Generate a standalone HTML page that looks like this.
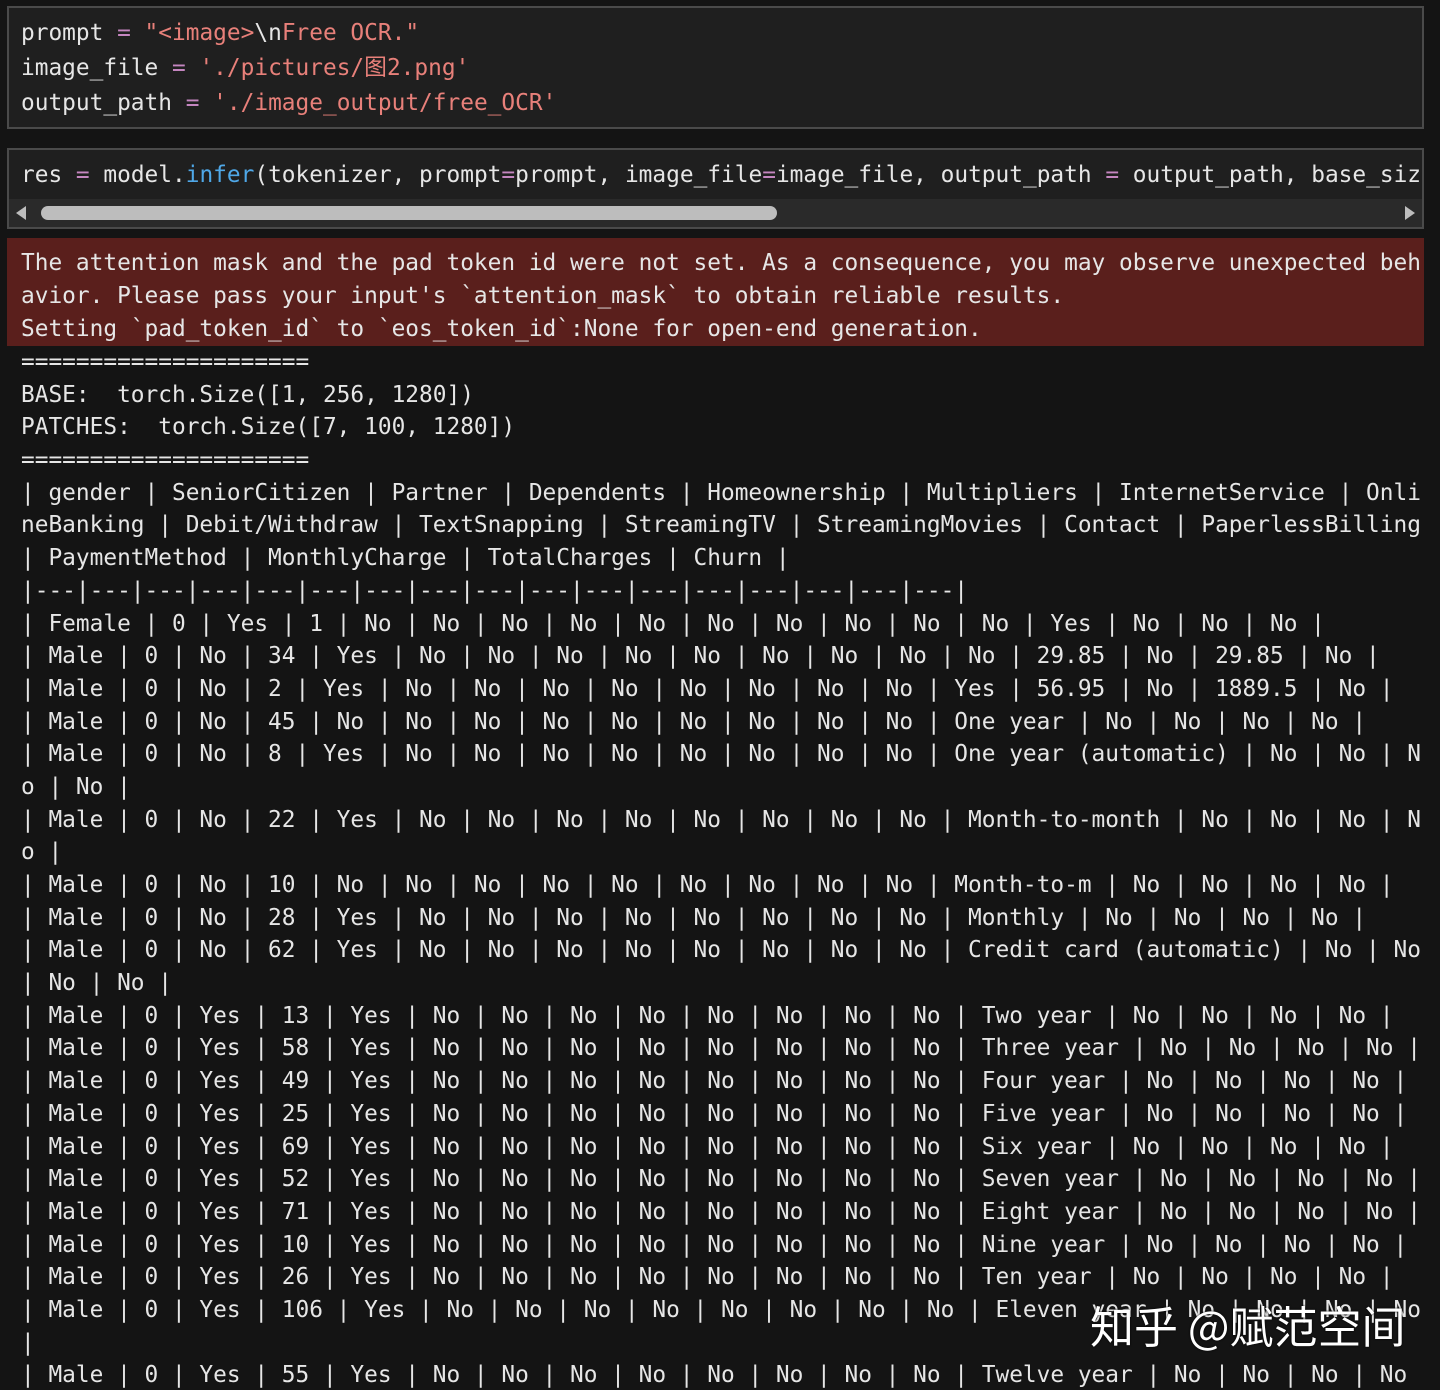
<!DOCTYPE html>
<html><head><meta charset="utf-8"><style>
html,body{margin:0;padding:0;background:#141414;width:1440px;height:1390px;overflow:hidden;position:relative}
*{box-sizing:border-box}
.m{font-family:"DejaVu Sans Mono","Liberation Mono","Noto Sans CJK SC",monospace;font-size:22.8px;white-space:pre;color:#e6e6e6}
.cell{position:absolute;left:7px;width:1417px;background:#1f1f1f;border:2px solid #4a4a4a}
.eq{color:#c586c0}.s{color:#e8807a}.f{color:#4fa8e8}
.l{position:absolute;left:21px;height:33px;line-height:33px}
</style></head><body>
<div class="cell" style="top:6px;height:123px"></div>
<div class="m l" style="top:17px">prompt <span class="eq">=</span> <span class="s">"&lt;image&gt;</span>\n<span class="s">Free OCR."</span></div>
<div class="m l" style="top:52px">image_file <span class="eq">=</span> <span class="s">'./pictures/图2.png'</span></div>
<div class="m l" style="top:87px">output_path <span class="eq">=</span> <span class="s">'./image_output/free_OCR'</span></div>

<div class="cell" style="top:148px;height:81px;overflow:hidden">
<div style="position:absolute;left:0;right:0;top:49px;height:28px;background:#2a2a2a"></div>
<div style="position:absolute;left:32px;top:56px;width:736px;height:14px;border-radius:7px;background:#bdbdbd"></div>
<div style="position:absolute;left:7px;top:56px;width:0;height:0;border-top:7px solid transparent;border-bottom:7px solid transparent;border-right:10px solid #bdbdbd"></div>
<div style="position:absolute;right:7px;top:56px;width:0;height:0;border-top:7px solid transparent;border-bottom:7px solid transparent;border-left:10px solid #bdbdbd"></div>
</div>
<div class="m l" style="top:159px;width:1400px;overflow:hidden">res <span class="eq">=</span> model.<span class="f">infer</span>(tokenizer, prompt<span class="eq">=</span>prompt, image_file<span class="eq">=</span>image_file, output_path <span class="eq">=</span> output_path, base_size</div>

<div style="position:absolute;left:7px;top:238px;width:1417px;height:108px;background:#5a1f1c"></div>
<div class="m" style="position:absolute;left:21px;top:247px;line-height:33px">The attention mask and the pad token id were not set. As a consequence, you may observe unexpected beh
avior. Please pass your input's `attention_mask` to obtain reliable results.
Setting `pad_token_id` to `eos_token_id`:None for open-end generation.</div>

<div class="m" style="position:absolute;left:21px;top:346px;line-height:32.68px">=====================
BASE:  torch.Size([1, 256, 1280])
PATCHES:  torch.Size([7, 100, 1280])
=====================
| gender | SeniorCitizen | Partner | Dependents | Homeownership | Multipliers | InternetService | Onli
neBanking | Debit/Withdraw | TextSnapping | StreamingTV | StreamingMovies | Contact | PaperlessBilling
| PaymentMethod | MonthlyCharge | TotalCharges | Churn |
|---|---|---|---|---|---|---|---|---|---|---|---|---|---|---|---|---|
| Female | 0 | Yes | 1 | No | No | No | No | No | No | No | No | No | No | Yes | No | No | No |
| Male | 0 | No | 34 | Yes | No | No | No | No | No | No | No | No | No | 29.85 | No | 29.85 | No |
| Male | 0 | No | 2 | Yes | No | No | No | No | No | No | No | No | Yes | 56.95 | No | 1889.5 | No |
| Male | 0 | No | 45 | No | No | No | No | No | No | No | No | No | One year | No | No | No | No |
| Male | 0 | No | 8 | Yes | No | No | No | No | No | No | No | No | One year (automatic) | No | No | N
o | No |
| Male | 0 | No | 22 | Yes | No | No | No | No | No | No | No | No | Month-to-month | No | No | No | N
o |
| Male | 0 | No | 10 | No | No | No | No | No | No | No | No | No | Month-to-m | No | No | No | No |
| Male | 0 | No | 28 | Yes | No | No | No | No | No | No | No | No | Monthly | No | No | No | No |
| Male | 0 | No | 62 | Yes | No | No | No | No | No | No | No | No | Credit card (automatic) | No | No
| No | No |
| Male | 0 | Yes | 13 | Yes | No | No | No | No | No | No | No | No | Two year | No | No | No | No |
| Male | 0 | Yes | 58 | Yes | No | No | No | No | No | No | No | No | Three year | No | No | No | No |
| Male | 0 | Yes | 49 | Yes | No | No | No | No | No | No | No | No | Four year | No | No | No | No |
| Male | 0 | Yes | 25 | Yes | No | No | No | No | No | No | No | No | Five year | No | No | No | No |
| Male | 0 | Yes | 69 | Yes | No | No | No | No | No | No | No | No | Six year | No | No | No | No |
| Male | 0 | Yes | 52 | Yes | No | No | No | No | No | No | No | No | Seven year | No | No | No | No |
| Male | 0 | Yes | 71 | Yes | No | No | No | No | No | No | No | No | Eight year | No | No | No | No |
| Male | 0 | Yes | 10 | Yes | No | No | No | No | No | No | No | No | Nine year | No | No | No | No |
| Male | 0 | Yes | 26 | Yes | No | No | No | No | No | No | No | No | Ten year | No | No | No | No |
| Male | 0 | Yes | 106 | Yes | No | No | No | No | No | No | No | No | Eleven year | No | No | No | No
|
| Male | 0 | Yes | 55 | Yes | No | No | No | No | No | No | No | No | Twelve year | No | No | No | No</div>
<div style="position:absolute;left:1090px;top:1296px;font-family:'Noto Sans CJK SC',sans-serif;font-size:44px;color:#fff;line-height:56px;white-space:nowrap;text-shadow:0 0 2px #000">知乎 @赋范空间</div>
</body></html>
